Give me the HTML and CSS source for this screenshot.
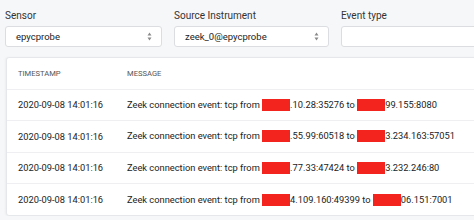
FILE: index.html
```html
<!DOCTYPE html>
<html lang="en">
  <head>
    <meta charset="UTF-8" />
    <title>Events</title>
    <link rel="stylesheet" href="styles.css">
  </head>
  <body>
    <div class="filters">
      <div class="filter">
        <label>Sensor</label>
        <div class="select">epycprobe
          <svg class="arrows" width="5" height="9" viewBox="0 0 5 9"><path d="M2.5 0.5 L4.5 3.5 H0.5 Z M2.5 8.5 L4.5 5.5 H0.5 Z" fill="#8a8a8a"/></svg>
        </div>
      </div>
      <div class="filter">
        <label>Source Instrument</label>
        <div class="select">zeek_0@epycprobe
          <svg class="arrows" width="5" height="9" viewBox="0 0 5 9"><path d="M2.5 0.5 L4.5 3.5 H0.5 Z M2.5 8.5 L4.5 5.5 H0.5 Z" fill="#8a8a8a"/></svg>
        </div>
      </div>
      <div class="filter">
        <label>Event type</label>
        <div class="select"></div>
      </div>
    </div>

    <div class="card">
      <table>
        <thead>
          <tr>
            <th class="ts">Timestamp</th>
            <th>Message</th>
          </tr>
        </thead>
        <tbody>
          <tr>
            <td class="ts">2020-09-08 14:01:16</td>
            <td>Zeek connection event: tcp from <span class="redact"></span>.10.28:35276 to <span class="redact"></span>99.155:8080</td>
          </tr>
          <tr>
            <td class="ts">2020-09-08 14:01:16</td>
            <td>Zeek connection event: tcp from <span class="redact"></span>.55.99:60518 to <span class="redact"></span>3.234.163:57051</td>
          </tr>
          <tr>
            <td class="ts">2020-09-08 14:01:16</td>
            <td>Zeek connection event: tcp from <span class="redact"></span>.77.33:47424 to <span class="redact"></span>3.232.246:80</td>
          </tr>
          <tr>
            <td class="ts">2020-09-08 14:01:16</td>
            <td>Zeek connection event: tcp from <span class="redact"></span>4.109.160:49399 to <span class="redact"></span>06.151:7001</td>
          </tr>
        </tbody>
      </table>
    </div>
  </body>
</html>
```

FILE: styles.css
```css
* {
  box-sizing: border-box;
}

body {
  margin: 0;
  background: #f6f7f9;
  font-family: Roboto, "Noto Sans", sans-serif;
  color: #222;
  overflow: hidden;
}

.filters {
  display: grid;
  grid-template-columns: 157px 155px 157px;
  column-gap: 12px;
  padding: 10px 0 0 5px;
}

.filter label {
  display: block;
  font-size: 10px;
  color: #333;
  height: 16px;
}

.select {
  position: relative;
  height: 21px;
  line-height: 19px;
  background: #fff;
  border: 1px solid #dcdde0;
  border-radius: 3px;
  padding-left: 10px;
  font-size: 9.5px;
  color: #222;
}

.filter:last-child .select {
  width: 160px;
}

.arrows {
  position: absolute;
  right: 9px;
  top: 5px;
}

.card {
  margin: 10px -30px 0 6px;
  background: #fff;
  border: 1px solid #e6e7ea;
  border-radius: 3px;
  box-shadow: -1px 0 2px rgba(0, 0, 0, 0.04);
}

table {
  width: 100%;
  border-collapse: collapse;
  font-size: 9.3px;
}

th {
  text-align: left;
  font-weight: normal;
  text-transform: uppercase;
  font-size: 7.6px;
  color: #555;
  height: 31px;
  padding: 0;
}

td {
  height: 31.6px;
  padding: 0;
  border-top: 1px solid #efeff1;
  white-space: nowrap;
}

.ts {
  width: 120px;
  padding-left: 11px;
}

.redact {
  display: inline-block;
  width: 28px;
  height: 12px;
  background: #f3231d;
  vertical-align: -3px;
}
```
